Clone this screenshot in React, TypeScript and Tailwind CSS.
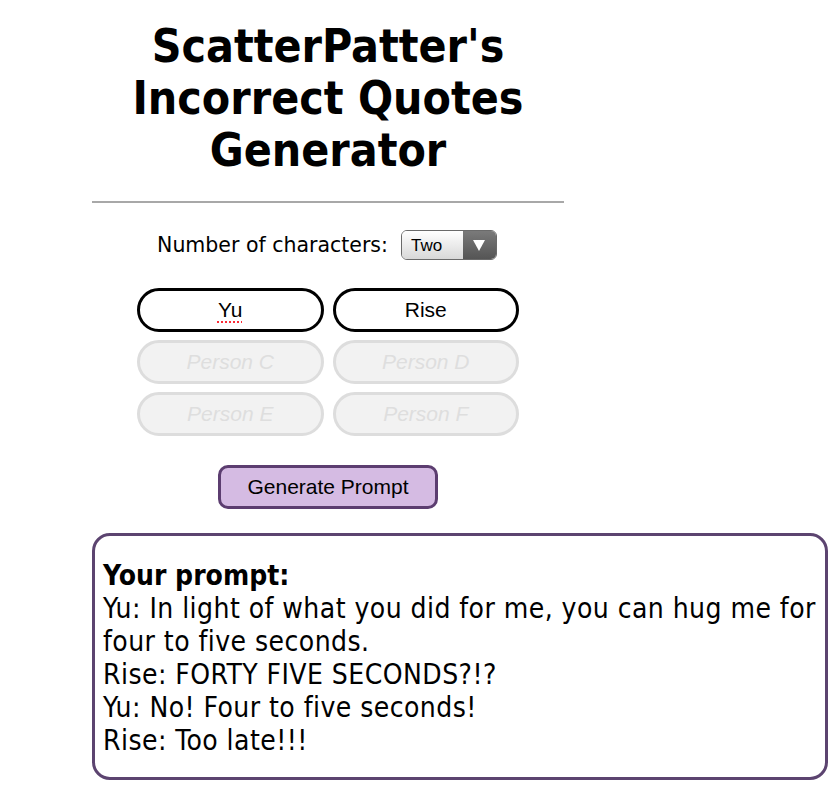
import React from "react";

const verdana = "font-['DejaVu_Sans',Verdana,sans-serif]";
const condensed = "font-['DejaVu_Sans_Condensed','DejaVu_Sans',Verdana,sans-serif]";
const arial = "font-['Liberation_Sans',Arial,sans-serif]";

const NameInput = ({ value, placeholder, disabled }: { value?: string; placeholder: string; disabled?: boolean }) => {
    if (disabled) {
        return (
            <div className={`h-[44px] rounded-full border-[3px] border-[#dddddd] bg-[#f2f2f2] flex items-center justify-center ${arial} italic text-[21px] text-[#dedede]`}>
                {placeholder}
            </div>
        );
    }
    return (
        <div className={`h-[44px] rounded-full border-[3px] border-black bg-white flex items-center justify-center ${arial} text-[21px] text-black`}>
            <span className={value === "Yu" ? "underline decoration-dotted decoration-red-500 decoration-2 underline-offset-4" : ""}>{value}</span>
        </div>
    );
};

const App = () => {
    return (
        <div className="bg-white min-h-[810px] w-[828px] text-black">
            <div className="ml-[92px] w-[472px] pt-[20px] flex flex-col items-center">
                <h1 className={`${condensed} font-bold text-[46px] leading-[52px] text-center`}>
                    ScatterPatter's
                    <br />
                    Incorrect Quotes
                    <br />
                    Generator
                </h1>
                <div className="mt-[25px] w-full h-[2px] bg-[#a8a8a8]" />
                <div className="mt-[27px] flex items-center gap-[13px] pr-[2px]">
                    <span className={`${verdana} text-[20.5px]`}>Number of characters:</span>
                    <div className="w-[96px] h-[30px] rounded-[6px] border border-[#6a6a6a] flex overflow-hidden">
                        <div className={`flex-1 bg-gradient-to-b from-white to-[#d8d8d8] ${arial} text-[17px] pl-[9px] flex items-center`}>Two</div>
                        <div className="w-[33px] bg-gradient-to-b from-[#7a7a7a] to-[#555555] flex items-center justify-center">
                            <svg width="12" height="11" viewBox="0 0 12 11">
                                <path d="M0 0 H12 L6 11 Z" fill="white" />
                            </svg>
                        </div>
                    </div>
                </div>
                <div className="mt-[27px] grid grid-cols-2 gap-x-[9px] gap-y-[8px] w-[382px]">
                    <NameInput value="Yu" placeholder="Person A" />
                    <NameInput value="Rise" placeholder="Person B" />
                    <NameInput placeholder="Person C" disabled />
                    <NameInput placeholder="Person D" disabled />
                    <NameInput placeholder="Person E" disabled />
                    <NameInput placeholder="Person F" disabled />
                </div>
                <button className={`mt-[29px] w-[220px] h-[44px] rounded-[10px] border-[3px] border-[#5c3d70] bg-[#d5bbe3] ${arial} text-[21px] text-black`}>
                    Generate Prompt
                </button>
            </div>
            <div className={`ml-[92px] mt-[24px] w-[736px] rounded-[18px] border-[3px] border-[#5c4470] px-[8px] pt-[23px] pb-[20px] ${condensed} text-[28px] leading-[33px] tracking-[0.45px]`}>
                <div className="font-bold tracking-normal">Your prompt:</div>
                <div>Yu: In light of what you did for me, you can hug me for four to five seconds.</div>
                <div>Rise: FORTY FIVE SECONDS?!?</div>
                <div>Yu: No! Four to five seconds!</div>
                <div>Rise: Too late!!!</div>
            </div>
        </div>
    );
};

export default App;
